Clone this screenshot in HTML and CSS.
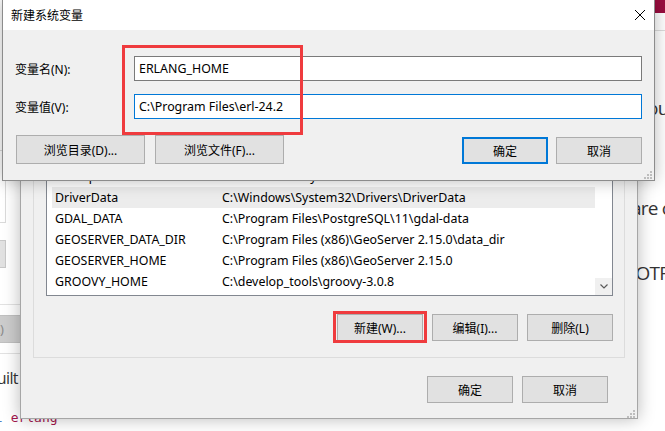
FILE: index.html
```html
<!DOCTYPE html>
<html lang="zh-CN">
<head>
<meta charset="utf-8">
<title>新建系统变量</title>
<link rel="stylesheet" href="styles.css">
</head>
<body>
<div class="page">
  <div class="page-left">
    <div class="old-box"></div>
    <div class="old-btn"></div>
    <div class="rule rule-a"></div>
    <div class="old-btn2"><span>(A)</span></div>
    <div class="rule rule-b"></div>
    <p class="old-text">Built</p>
    <p class="old-code"><span class="kw">install</span> <span class="str">erlang</span></p>
  </div>
  <div class="page-right">
    <div class="hdr"><div class="redbar"></div></div>
    <p class="rt rt-1">ou</p>
    <p class="rt rt-2">are c</p>
    <p class="rt rt-3">VOTR</p>
  </div>
</div>

<div class="dlg dlg-back">
  <div class="group">
    <div class="listbox">
      <div class="items">
        <div class="row"><span class="c1">ComSpec</span><span>C:\WINDOWS\system32\cmd.exe</span></div>
        <div class="row sel"><span class="c1">DriverData</span><span>C:\Windows\System32\Drivers\DriverData</span></div>
        <div class="row"><span class="c1">GDAL_DATA</span><span>C:\Program Files\PostgreSQL\11\gdal-data</span></div>
        <div class="row"><span class="c1">GEOSERVER_DATA_DIR</span><span>C:\Program Files (x86)\GeoServer 2.15.0\data_dir</span></div>
        <div class="row"><span class="c1">GEOSERVER_HOME</span><span>C:\Program Files (x86)\GeoServer 2.15.0</span></div>
        <div class="row"><span class="c1">GROOVY_HOME</span><span>C:\develop_tools\groovy-3.0.8</span></div>
      </div>
      <div class="scroll">
        <div class="arrow"><svg width="8" height="5" viewBox="0 0 8 5"><polyline points="0.5,0.5 4,4 7.5,0.5" fill="none" stroke="#5a5a5a" stroke-width="1.2"/></svg></div>
      </div>
    </div>
    <div class="btnrow-group">
      <button class="btn">新建(W)...</button>
      <button class="btn">编辑(I)...</button>
      <button class="btn">删除(L)</button>
    </div>
  </div>
  <div class="btnrow-bottom">
    <button class="btn">确定</button>
    <button class="btn">取消</button>
  </div>
  <svg class="grip" width="8" height="8" viewBox="0 0 8 8"><g fill="#bdbdbd"><rect x="6" y="0" width="2" height="2"/><rect x="3" y="3" width="2" height="2"/><rect x="6" y="3" width="2" height="2"/><rect x="0" y="6" width="2" height="2"/><rect x="3" y="6" width="2" height="2"/><rect x="6" y="6" width="2" height="2"/></g></svg>
</div>

<div class="dlg dlg-front">
  <div class="titlebar">
    <span class="title">新建系统变量</span>
    <svg class="close" width="10" height="10" viewBox="0 0 10 10"><path d="M0 0 L10 10 M10 0 L0 10" stroke="#000" stroke-width="1"/></svg>
  </div>
  <div class="body">
    <div class="field"><label class="lbl">变量名(N):</label><div class="input">ERLANG_HOME</div></div>
    <div class="field"><label class="lbl">变量值(V):</label><div class="input focus">C:\Program Files\erl-24.2</div></div>
    <div class="btnrow-front">
      <button class="btn btn-browse">浏览目录(D)...</button>
      <button class="btn btn-browse">浏览文件(F)...</button>
      <button class="btn btn-ok default">确定</button>
      <button class="btn btn-ok">取消</button>
    </div>
  </div>
  <svg class="grip grip-front" width="8" height="8" viewBox="0 0 8 8"><g fill="#bdbdbd"><rect x="6" y="0" width="2" height="2"/><rect x="3" y="3" width="2" height="2"/><rect x="6" y="3" width="2" height="2"/><rect x="0" y="6" width="2" height="2"/><rect x="3" y="6" width="2" height="2"/><rect x="6" y="6" width="2" height="2"/></g></svg>
</div>

<div class="mark mark-fields"></div>
<div class="mark mark-new"></div>
</body>
</html>
```
FILE: styles.css
```css
* { box-sizing: border-box; }
html, body { margin: 0; padding: 0; }
body {
  width: 665px;
  height: 431px;
  overflow: hidden;
  position: relative;
  background: #fff;
  font-family: "Noto Sans", "Noto Sans CJK SC", sans-serif;
  font-size: 12px;
  color: #000;
}
p { margin: 0; }

/* background web page */
.page { display: flex; justify-content: space-between; height: 431px; }
.page-left { width: 62px; overflow: hidden; display: flex; flex-direction: column; flex: none; }
.old-box { margin: 150px 0 0 -100px; width: 106px; height: 73px; border: 1px solid #dadada; flex: none; }
.old-btn { margin: 17px 0 0 -100px; width: 106px; height: 28px; background: #e1e1e1; border: 1px solid #c8c8c8; flex: none; }
.rule { border-top: 1px solid #e2e2e2; flex: none; }
.rule-a { margin-top: 36px; }
.old-btn2 {
  margin: 10px 0 0 -60px; width: 120px; height: 28px; flex: none;
  background: #cccccc; border: 1px solid #c0c0c0;
  display: flex; align-items: center; justify-content: flex-end; padding-right: 55px;
  color: #8a8a8a; font-size: 13px;
}
.rule-b { margin-top: 10px; }
.old-text {
  margin: 14px 0 0 -13px; font-family: "Open Sans", sans-serif; font-size: 16px;
  letter-spacing: -0.6px; line-height: 20px; color: #333; white-space: nowrap;
}
.old-code {
  margin: 22px 0 0 -52px; font-family: "DejaVu Sans Mono", monospace; font-size: 13px;
  line-height: 16px; white-space: nowrap;
}
.kw { color: #4d7fc4; }
.str { color: #a3154d; }

.page-right { width: 30px; overflow: hidden; flex: none; }
.hdr { height: 31px; border-bottom: 1px solid #dcdcdc; }
.redbar { height: 13px; background: #9a0d3f; }
.rt { font-family: "Open Sans", sans-serif; font-size: 19px; letter-spacing: -0.8px; line-height: 27px; color: #333; white-space: nowrap; }
.rt-1 { margin-top: 64px; padding-left: 12px; }
.rt-2 { margin-top: 73px; margin-left: -4px; }
.rt-3 { margin-top: 38px; margin-left: -10px; }

/* dialogs */
.dlg {
  position: absolute;
  background: #f0f0f0;
  border: 1px solid #8c8c8c;
  box-shadow: 0 0 16px rgba(0, 0, 0, 0.28);
}
.dlg-back {
  left: 20px; top: -1px; width: 618px; height: 420px;
  border-color: #a6a6a6;
  display: flex; flex-direction: column; justify-content: flex-end;
}
.group {
  margin: 0 12px;
  border: 1px solid #dcdcdc;
  padding: 0 11px 16px 12px;
}
.listbox {
  height: 200px;
  border: 1px solid #828790;
  background: #fff;
  display: flex;
}
.items {
  flex: 1;
  overflow: hidden;
  display: flex; flex-direction: column; justify-content: flex-end;
  padding-bottom: 3px;
}
.row {
  height: 21px; margin-left: 5px; padding-left: 3px;
  display: flex; align-items: center; white-space: nowrap; flex: none;
  font-size: 12.4px;
}
.row.sel { background: #ececec; }
.c1 { width: 167px; flex: none; }
.scroll { width: 17px; flex: none; display: flex; flex-direction: column; justify-content: flex-end; }
.arrow { height: 17px; background: #f0f0f0; display: flex; align-items: center; justify-content: center; }

.btn {
  font: inherit;
  color: #000;
  background: #e1e1e1;
  border: 1px solid #adadad;
  padding: 0;
  width: 86px;
  height: 27px;
  margin: 0;
}
.btnrow-group { display: flex; justify-content: flex-end; gap: 9px; margin-top: 18px; }
.btnrow-bottom { display: flex; justify-content: flex-end; gap: 9px; margin-top: 18px; padding: 0 29px 15px 0; }
.grip { position: absolute; right: 2px; bottom: 0; }

.dlg-front { left: 2px; top: -1px; width: 653px; height: 182px; }
.titlebar {
  height: 30px; background: #fff;
  display: flex; align-items: center; justify-content: space-between;
  padding: 0 9px 0 8px;
}
.title { font-size: 12px; }
.body { padding: 26px 12px 0 12px; display: flex; flex-direction: column; gap: 13px; }
.field { display: flex; align-items: center; height: 25px; }
.lbl { width: 119px; flex: none; }
.input {
  flex: 1; height: 25px; background: #fff; border: 1px solid #7a7a7a;
  padding-left: 4px; display: flex; align-items: center; white-space: nowrap;
  font-size: 12.4px;
}
.input.focus { border-color: #0078d7; }
.btnrow-front { display: flex; align-items: flex-end; margin-top: 3px; height: 29px; }
.btn-browse { width: 129px; height: 29px; margin-right: 10px; }
.btn-browse:first-child { margin-left: 1px; }
.btn-ok { height: 27px; }
.btn-ok.default { margin-left: auto; margin-right: 8px; border: 2px solid #0078d7; }
.grip-front { right: 2px; bottom: 1px; }

/* red annotation boxes */
.mark { position: absolute; border: 3px solid #ef3b3e; }
.mark-fields { left: 122px; top: 45px; width: 181px; height: 90px; }
.mark-new { left: 333px; top: 311px; width: 94px; height: 32px; }
```
